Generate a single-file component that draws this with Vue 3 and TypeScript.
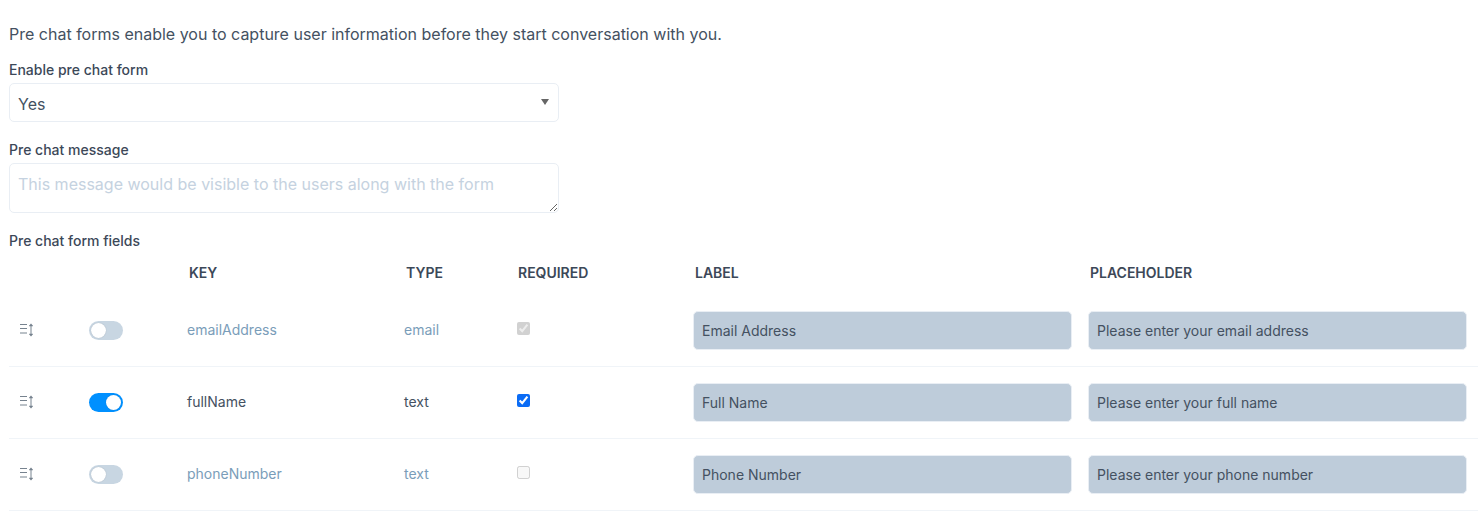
<script setup lang="ts">
interface Field {
  key: string
  type: string
  enabled: boolean
  required: boolean
  locked: boolean
  label: string
  placeholder: string
}

const fields: Field[] = [
  { key: 'emailAddress', type: 'email', enabled: false, required: true, locked: true, label: 'Email Address', placeholder: 'Please enter your email address' },
  { key: 'fullName', type: 'text', enabled: true, required: true, locked: false, label: 'Full Name', placeholder: 'Please enter your full name' },
  { key: 'phoneNumber', type: 'text', enabled: false, required: false, locked: true, label: 'Phone Number', placeholder: 'Please enter your phone number' },
]
const headers = ['', '', 'Key', 'Type', 'Required', 'Label', 'Placeholder']
</script>

<template>
  <main class="page">
    <p class="intro">Pre chat forms enable you to capture user information before they start conversation with you.</p>

    <label class="field-label" for="enable">Enable pre chat form</label>
    <div class="select-wrap">
      <select id="enable" class="control select">
        <option>Yes</option>
        <option>No</option>
      </select>
      <span class="caret"></span>
    </div>

    <label class="field-label msg-label" for="msg">Pre chat message</label>
    <textarea id="msg" class="control textarea" placeholder="This message would be visible to the users along with the form"></textarea>

    <div class="field-label fields-label">Pre chat form fields</div>

    <div class="grid head">
      <div v-for="(h, i) in headers" :key="i" class="th" :class="{ shifted: i === 2 || i === 3 }">{{ h }}</div>
    </div>

    <div v-for="f in fields" :key="f.key" class="grid row" :class="{ muted: !f.enabled }">
      <div class="cell handle">
        <svg width="16" height="14" viewBox="0 0 16 14" fill="none" stroke="#77838f" stroke-width="1">
          <path d="M1 1.5H8M1 5.5H8M1 10H8" />
          <path d="M12 1.5V12.5" />
          <path d="M10.2 3L12 0.8L13.8 3Z" fill="#77838f" stroke-width="0.5" />
          <path d="M10.2 11L12 13.2L13.8 11Z" fill="#77838f" stroke-width="0.5" />
        </svg>
      </div>
      <div class="cell">
        <span class="toggle" :class="{ on: f.enabled }"><span class="knob"></span></span>
      </div>
      <div class="cell text">{{ f.key }}</div>
      <div class="cell text">{{ f.type }}</div>
      <div class="cell check-cell">
        <input type="checkbox" class="check" :checked="f.required" :disabled="f.locked" />
      </div>
      <div class="cell input-cell">
        <input class="filled" type="text" :value="f.label" disabled />
      </div>
      <div class="cell input-cell">
        <input class="filled" type="text" :value="f.placeholder" disabled />
      </div>
    </div>
  </main>
</template>

<style>
html, body {
  margin: 0;
  background: #fff;
}
</style>

<style scoped>
.page {
  width: 1478px;
  height: 514px;
  overflow: hidden;
  box-sizing: border-box;
  padding: 24px 0 0 9px;
  font-family: Inter, "Noto Sans", sans-serif;
  color: #445161;
}
.intro {
  margin: 0 0 16px;
  font-size: 16px;
  line-height: 20px;
  color: #445161;
}
.field-label {
  display: block;
  font-size: 14px;
  line-height: 20px;
  font-weight: 500;
  color: #3c4858;
  margin-bottom: 3px;
}
.msg-label { margin-top: 18px; }
.fields-label { margin-top: 18px; }
.select-wrap {
  position: relative;
  width: 550px;
}
.control {
  display: block;
  box-sizing: border-box;
  width: 550px;
  border: 1px solid #e9eef4;
  border-radius: 5px;
  background: #fff;
  font-family: inherit;
  font-size: 16px;
  color: #445161;
  outline: none;
}
.select {
  height: 39px;
  padding: 2px 8px 0;
  appearance: none;
}
.caret {
  position: absolute;
  right: 10px;
  top: 16px;
  width: 0;
  height: 0;
  border-left: 4px solid transparent;
  border-right: 4px solid transparent;
  border-top: 6px solid #666;
}
.textarea {
  height: 50px;
  padding: 10px 8px;
  line-height: 20px;
  resize: vertical;
}
.textarea::placeholder {
  color: #c5d2e0;
  opacity: 1;
}
.grid {
  display: grid;
  grid-template-columns: 71px 98px 217px 113px 177px 395px 1fr;
}
.head {
  box-sizing: border-box;
  height: 41px;
  padding-bottom: 5px;
  align-items: center;
}
.th {
  padding-left: 10px;
  font-size: 14px;
  font-weight: 600;
  text-transform: uppercase;
  color: #3c4858;
}
.th.shifted { padding-left: 11px; }
.row {
  height: 71px;
  border-bottom: 1px solid #f0f4f8;
  align-items: center;
}
.cell {
  padding-left: 9px;
  display: flex;
  align-items: center;
}
.handle {
  padding-left: 10px;
  margin-top: -2px;
}
.text {
  margin-top: -2px;
  font-size: 14px;
  color: #445161;
}
.muted .text { color: #7a9db9; }
.toggle {
  position: relative;
  display: block;
  width: 34px;
  height: 19px;
  border-radius: 10px;
  background: #c8d6e2;
}
.toggle.on { background: #0090ff; }
.knob {
  position: absolute;
  left: 2px;
  top: 2px;
  width: 15px;
  height: 15px;
  border-radius: 50%;
  background: #fff;
  box-shadow: 0 0 1px rgba(60, 72, 88, 0.35);
}
.on .knob { left: 17px; }
.check-cell { margin-top: -4px; }
.check {
  width: 13px;
  height: 13px;
  margin: 0;
  accent-color: #0b6cf5;
}
.input-cell {
  padding-left: 8px;
}
.filled {
  box-sizing: border-box;
  width: 379px;
  height: 39px;
  padding: 0 8px;
  border: 1px solid #e9eef4;
  border-radius: 5px;
  background: #beccda;
  font-family: inherit;
  font-size: 14px;
  color: #445161;
  -webkit-text-fill-color: #445161;
  opacity: 1;
}
</style>
